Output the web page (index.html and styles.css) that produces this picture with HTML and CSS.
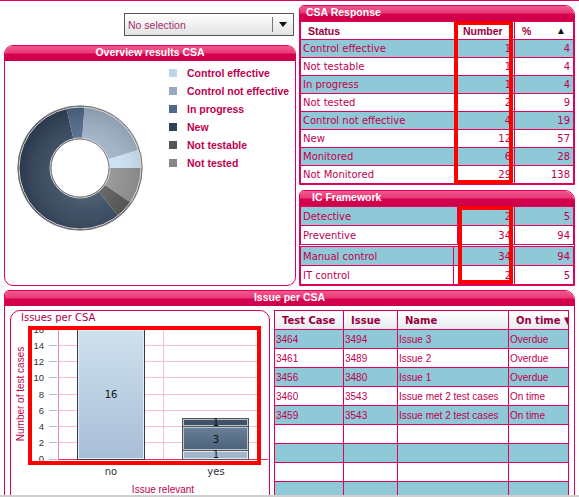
FILE: index.html
```html
<!DOCTYPE html>
<html lang="en">
<head>
  <meta charset="UTF-8">
  <meta name="viewport" content="width=device-width, initial-scale=1.0">
  <title>CSA Dashboard</title>
  <link rel="stylesheet" href="styles.css">
</head>
<body>
  <div class="page">
    <div class="top">
      <div class="col-left">
        <div class="select">
          <span class="select-text">No selection</span>
          <span class="select-btn"><i class="caret"></i></span>
        </div>
        <section class="panel overview">
          <h2 class="panel-title center">Overview results CSA</h2>
          <div class="overview-body">
            <svg class="donut" width="132" height="132" viewBox="-1 -1 132 132">
              <defs>
                <radialGradient id="shade" gradientUnits="userSpaceOnUse" cx="72" cy="72" r="66">
                  <stop offset="0" stop-color="#fff" stop-opacity="0.25"/>
                  <stop offset="0.55" stop-color="#fff" stop-opacity="0.08"/>
                  <stop offset="1" stop-color="#000" stop-opacity="0.12"/>
                </radialGradient>
              </defs>
              <g class="slices">
                <!-- not tested -->
                <path fill="#8a8a8a" d="M127,65 A62,62 0 0 1 116.22,99.92 L88.96,81.34 A29,29 0 0 0 94,65 Z"/>
                <!-- not testable -->
                <path fill="#4f4f4f" d="M116.22,99.92 A62,62 0 0 1 103.66,113.47 L83.08,87.67 A29,29 0 0 0 88.96,81.34 Z"/>
                <!-- new -->
                <path fill="#33445a" d="M103.66,113.47 A62,62 0 1 1 51.20,4.56 L58.55,36.73 A29,29 0 1 0 83.08,87.67 Z"/>
                <!-- in progress -->
                <path fill="#50698a" d="M51.20,4.56 A62,62 0 0 1 69.63,3.17 L67.17,36.08 A29,29 0 0 0 58.55,36.73 Z"/>
                <!-- control not effective -->
                <path fill="#9cafc4" d="M69.63,3.17 A62,62 0 0 1 124.25,46.72 L92.71,56.45 A29,29 0 0 0 67.17,36.08 Z"/>
                <!-- control effective -->
                <path fill="#c8def0" d="M124.25,46.72 A62,62 0 0 1 127,65 L94,65 A29,29 0 0 0 92.71,56.45 Z"/>
              </g>
              <circle cx="65" cy="65" r="45.5" fill="none" stroke="url(#shade)" stroke-width="33"/>
              <circle cx="65" cy="65" r="61" fill="none" stroke="#d8d8d8" stroke-width="1"/>
              <circle cx="65" cy="65" r="62.2" fill="none" stroke="#6e6e6e" stroke-width="1"/>
              <circle cx="65" cy="65" r="30" fill="none" stroke="#d8d8d8" stroke-width="1"/>
              <circle cx="65" cy="65" r="29" fill="#fff" stroke="#7a7a7a" stroke-width="1"/>
            </svg>
            <ul class="legend">
              <li><span class="swatch" style="background:#bcd4ec"></span>Control effective</li>
              <li><span class="swatch" style="background:#97aabf"></span>Control not effective</li>
              <li><span class="swatch" style="background:#4f6a88"></span>In progress</li>
              <li><span class="swatch" style="background:#2f4157"></span>New</li>
              <li><span class="swatch" style="background:#555555"></span>Not testable</li>
              <li><span class="swatch" style="background:#878787"></span>Not tested</li>
            </ul>
          </div>
        </section>
      </div>

      <div class="col-right">
        <section class="panel csa">
          <h2 class="panel-title">CSA Response</h2>
          <table class="grid">
            <colgroup><col style="width:155px"><col style="width:59px"><col></colgroup>
            <thead>
              <tr><th>Status</th><th>Number</th><th>% <span class="sort">▲</span></th></tr>
            </thead>
            <tbody>
              <tr><td>Control effective</td><td class="num">1</td><td class="num">4</td></tr>
              <tr><td>Not testable</td><td class="num">1</td><td class="num">4</td></tr>
              <tr><td>In progress</td><td class="num">1</td><td class="num">4</td></tr>
              <tr><td>Not tested</td><td class="num">2</td><td class="num">9</td></tr>
              <tr><td>Control not effective</td><td class="num">4</td><td class="num">19</td></tr>
              <tr><td>New</td><td class="num">12</td><td class="num">57</td></tr>
              <tr><td>Monitored</td><td class="num">6</td><td class="num">28</td></tr>
              <tr><td>Not Monitored</td><td class="num">29</td><td class="num">138</td></tr>
            </tbody>
          </table>
          <div class="mark mark-csa"></div>
        </section>

        <section class="panel ic">
          <h2 class="panel-title wide">IC Framework</h2>
          <table class="grid tall">
            <colgroup><col style="width:157px"><col style="width:57px"><col></colgroup>
            <tbody>
              <tr><td>Detective</td><td class="num">2</td><td class="num">5</td></tr>
              <tr><td>Preventive</td><td class="num">34</td><td class="num">94</td></tr>
            </tbody>
          </table>
          <table class="grid tall second">
            <colgroup><col style="width:153px"><col style="width:61px"><col></colgroup>
            <tbody>
              <tr><td>Manual control</td><td class="num">34</td><td class="num">94</td></tr>
              <tr><td>IT control</td><td class="num">2</td><td class="num">5</td></tr>
            </tbody>
          </table>
          <div class="mark mark-ic"></div>
        </section>
      </div>
    </div>

    <section class="panel issues">
      <h2 class="panel-title center">Issue per CSA</h2>
      <div class="issues-body">
        <div class="chart-box">
          <div class="chart-title">Issues per CSA</div>
          <svg class="chart" width="258" height="180" viewBox="11 327 258 180">
            <defs>
              <linearGradient id="barNo" x1="0" y1="0" x2="0" y2="1">
                <stop offset="0" stop-color="#cfe1ee"/>
                <stop offset="1" stop-color="#a8bed8"/>
              </linearGradient>
              <linearGradient id="barMid" x1="0" y1="0" x2="0" y2="1">
                <stop offset="0" stop-color="#6a8199"/>
                <stop offset="1" stop-color="#4b6079"/>
              </linearGradient>
            </defs>
            <g stroke="#f7bfd1" stroke-width="1">
              <line x1="58" y1="329.5" x2="259" y2="329.5"/>
              <line x1="58" y1="345.5" x2="259" y2="345.5"/>
              <line x1="58" y1="361.5" x2="259" y2="361.5"/>
              <line x1="58" y1="377.5" x2="259" y2="377.5"/>
              <line x1="58" y1="394.5" x2="259" y2="394.5"/>
              <line x1="58" y1="410.5" x2="259" y2="410.5"/>
              <line x1="58" y1="426.5" x2="259" y2="426.5"/>
              <line x1="58" y1="442.5" x2="259" y2="442.5"/>
              <line x1="163.5" y1="329" x2="163.5" y2="459"/>
              <line x1="258.5" y1="329" x2="258.5" y2="459"/>
            </g>
            <line x1="58.5" y1="329" x2="58.5" y2="459" stroke="#e98aae" stroke-width="1"/>
            <line x1="58" y1="459.5" x2="268" y2="459.5" stroke="#d6336f" stroke-width="1"/>
            <g stroke="#a9c0d4" stroke-width="1">
              <line x1="49" y1="329.5" x2="57" y2="329.5"/>
              <line x1="49" y1="345.5" x2="57" y2="345.5"/>
              <line x1="49" y1="361.5" x2="57" y2="361.5"/>
              <line x1="49" y1="377.5" x2="57" y2="377.5"/>
              <line x1="49" y1="394.5" x2="57" y2="394.5"/>
              <line x1="49" y1="410.5" x2="57" y2="410.5"/>
              <line x1="49" y1="426.5" x2="57" y2="426.5"/>
              <line x1="49" y1="442.5" x2="57" y2="442.5"/>
              <line x1="49" y1="459.5" x2="57" y2="459.5"/>
            </g>
            <g class="ylabels">
              <text x="44" y="333">16</text>
              <text x="44" y="349">14</text>
              <text x="44" y="365">12</text>
              <text x="44" y="381">10</text>
              <text x="44" y="398">8</text>
              <text x="44" y="414">6</text>
              <text x="44" y="430">4</text>
              <text x="44" y="446">2</text>
              <text x="44" y="462">0</text>
            </g>

            <rect x="77.5" y="329.5" width="67" height="130" fill="url(#barNo)" stroke="#3a3a3a"/>
            <rect x="78.5" y="330.5" width="65" height="128" fill="none" stroke="#e6eef5"/>

            <rect x="182.5" y="418.5" width="66" height="8" fill="#40526a" stroke="#555"/>
            <rect x="183.5" y="419.5" width="64" height="6" fill="none" stroke="#b8c4d0"/>
            <rect x="182.5" y="426.5" width="66" height="24" fill="url(#barMid)" stroke="#555"/>
            <rect x="183.5" y="427.5" width="64" height="22" fill="none" stroke="#b8c4d0"/>
            <rect x="182.5" y="450.5" width="66" height="9" fill="#a2b5ca" stroke="#555"/>
            <rect x="183.5" y="451.5" width="64" height="7" fill="none" stroke="#dfe7ef"/>

            <g class="values">
              <text x="111" y="398">16</text>
              <text x="216" y="426">1</text>
              <text x="216" y="443">3</text>
              <text x="216" y="458">1</text>
            </g>
            <g class="xlabels">
              <text x="111" y="475">no</text>
              <text x="216" y="475">yes</text>
            </g>
            <text class="axis-title" x="163" y="493">Issue relevant</text>
            <text class="axis-title" x="24" y="394" transform="rotate(-90 24 394)">Number of test cases</text>
          </svg>
          <div class="mark mark-chart"></div>
        </div>

        <div class="list-wrap">
          <table class="list">
            <colgroup><col style="width:69px"><col style="width:54px"><col style="width:111px"><col></colgroup>
            <thead>
              <tr><th>Test Case</th><th>Issue</th><th>Name</th><th>On time ▼</th></tr>
            </thead>
            <tbody>
              <tr><td>3464</td><td>3494</td><td>Issue 3</td><td>Overdue</td></tr>
              <tr><td>3461</td><td>3489</td><td>Issue 2</td><td>Overdue</td></tr>
              <tr><td>3456</td><td>3480</td><td>Issue 1</td><td>Overdue</td></tr>
              <tr><td>3460</td><td>3543</td><td>Issue met 2 test cases</td><td>On time</td></tr>
              <tr><td>3459</td><td>3543</td><td>Issue met 2 test cases</td><td>On time</td></tr>
              <tr><td></td><td></td><td></td><td></td></tr>
              <tr><td></td><td></td><td></td><td></td></tr>
              <tr><td></td><td></td><td></td><td></td></tr>
              <tr><td></td><td></td><td></td><td></td></tr>
            </tbody>
          </table>
        </div>
      </div>
    </section>
  </div>
  <div class="scrollbar"></div>
</body>
</html>
```

FILE: styles.css
```css
html, body {
  overflow: hidden;
}
body {
  margin: 0;
  border-top: 1px solid #e0005a;
  font-family: 'DejaVu Sans', sans-serif;
  background: #fff;
  color: #c0004e;
}
.page {
  margin: 0 4px;
}
.top {
  display: grid;
  grid-template-columns: 292px 276px;
  column-gap: 3px;
}
.col-left {
  display: flex;
  flex-direction: column;
}
.col-right {
  display: flex;
  flex-direction: column;
}

/* dropdown */
.select {
  align-self: flex-end;
  margin: 12px 2px 0 0;
  width: 170px;
  height: 23px;
  box-sizing: border-box;
  border: 1px solid #555;
  background: linear-gradient(#ffffff, #e2e2e2);
  display: flex;
  align-items: center;
}
.select-text {
  flex: 1;
  padding-left: 3px;
  font: 10.5px 'Liberation Sans', Arial, sans-serif;
  color: #a0306e;
}
.select-btn {
  width: 20px;
  height: 15px;
  border-left: 1px solid #777;
  display: flex;
  align-items: center;
  justify-content: center;
}
.caret {
  width: 0;
  height: 0;
  border-left: 4px solid transparent;
  border-right: 4px solid transparent;
  border-top: 5px solid #111;
}

/* panels */
.panel {
  position: relative;
  border: 1px solid #e0005a;
  border-radius: 5px 10px 0 0;
  background: #fff;
}
.panel-title {
  margin: 0;
  height: 15px;
  line-height: 15px;
  padding-left: 6px;
  border-radius: 4px 9px 0 0;
  background: linear-gradient(#f0588c 0%, #ea3a77 45%, #d5004e 55%, #cd004a 100%);
  color: #fff;
  font: bold 10.5px 'Liberation Sans', Arial, sans-serif;
  white-space: nowrap;
}
.panel-title.center {
  padding-left: 0;
  text-align: center;
}
.panel-title.wide {
  padding-left: 12px;
}

.overview {
  margin-top: 9px;
  height: 241px;
  box-sizing: border-box;
  border-radius: 9px;
}
.overview .panel-title {
  border-radius: 8px 8px 0 0;
}
.overview-body {
  display: flex;
  align-items: flex-start;
}
.donut {
  margin: 41px 0 0 9px;
  flex: none;
}
.legend {
  list-style: none;
  margin: 0 0 0 23px;
  padding: 3px 0 0 0;
  font: bold 10.5px 'Liberation Sans', Arial, sans-serif;
  color: #c0004e;
}
.legend li {
  height: 18px;
  line-height: 18px;
  display: flex;
  align-items: center;
  white-space: nowrap;
}
.swatch {
  width: 8px;
  height: 8px;
  margin-right: 10px;
  flex: none;
}

.csa {
  margin-top: 4px;
}
.ic {
  margin-top: 5px;
  height: 96px;
  box-sizing: border-box;
}

/* data tables */
.grid {
  width: 100%;
  border-collapse: collapse;
  table-layout: fixed;
  font: 10px 'DejaVu Sans', sans-serif;
  color: #c0004e;
}
.grid th, .grid td {
  border: 1px solid #e0005a;
  height: 17px;
  padding: 0 2px;
  white-space: nowrap;
  overflow: hidden;
}
.grid th {
  text-align: left;
  padding-left: 7px;
  font: bold 10.5px 'Liberation Sans', Arial, sans-serif;
  color: #9a0040;
  background: #fff;
}
.grid tbody tr:nth-child(odd) {
  background: #8fc8d6;
}
.grid td.num {
  text-align: right;
  padding-right: 3px;
}
.grid.tall td {
  height: 18px;
}
.grid.second {
  margin-top: 1px;
}
.sort {
  float: right;
  margin-right: 5px;
  font-size: 10px;
  color: #111;
}

/* red highlight frames */
.mark {
  position: absolute;
  border: 4px solid #ff0000;
  box-sizing: border-box;
  pointer-events: none;
}
.mark-csa {
  left: 154px;
  top: 15px;
  width: 59px;
  height: 163px;
}
.mark-ic {
  left: 158px;
  top: 15px;
  width: 55px;
  height: 78px;
}
.mark-chart {
  left: 17px;
  top: 15px;
  width: 233px;
  height: 139px;
}

/* issue panel */
.issues {
  margin-top: 4px;
  height: 230px;
}
.issues-body {
  display: flex;
  gap: 4px;
  padding: 4px 0 0 5px;
}
.chart-box {
  position: relative;
  width: 260px;
  height: 200px;
  box-sizing: border-box;
  border: 1px solid #e0005a;
  border-radius: 10px 10px 0 0;
  flex: none;
}
.chart-title {
  height: 16px;
  line-height: 14px;
  padding-left: 10px;
  font-size: 10px;
  color: #b0004a;
}
.chart {
  display: block;
}
.chart text {
  font-family: 'DejaVu Sans', sans-serif;
}
.ylabels text {
  font: 9.5px 'Liberation Sans', Arial, sans-serif;
  fill: #333;
  text-anchor: end;
}
.values text {
  font-size: 10px;
  fill: #111;
  text-anchor: middle;
}
.xlabels text {
  font-size: 10px;
  fill: #333;
  text-anchor: middle;
}
.chart .axis-title {
  font: 10px 'Liberation Sans', Arial, sans-serif;
  fill: #c0004e;
  text-anchor: middle;
}

.list-wrap {
  width: 295px;
  overflow: hidden;
}
.list {
  width: 100%;
  border-collapse: collapse;
  table-layout: fixed;
  font: 10px 'Liberation Sans', Arial, sans-serif;
  color: #c0004e;
}
.list th, .list td {
  border: 1px solid #e0005a;
  height: 18px;
  padding: 0 1px;
  white-space: nowrap;
  overflow: hidden;
}
.list th {
  text-align: left;
  padding-left: 7px;
  font: bold 10px 'DejaVu Sans', sans-serif;
  color: #9a0040;
  background: linear-gradient(#ffffff, #e4ebee);
}
.list tbody tr:nth-child(odd) {
  background: #8fc8d6;
}

.scrollbar {
  position: fixed;
  left: 0;
  right: 0;
  bottom: 0;
  height: 2px;
  background: #cfcfcf;
}
```
